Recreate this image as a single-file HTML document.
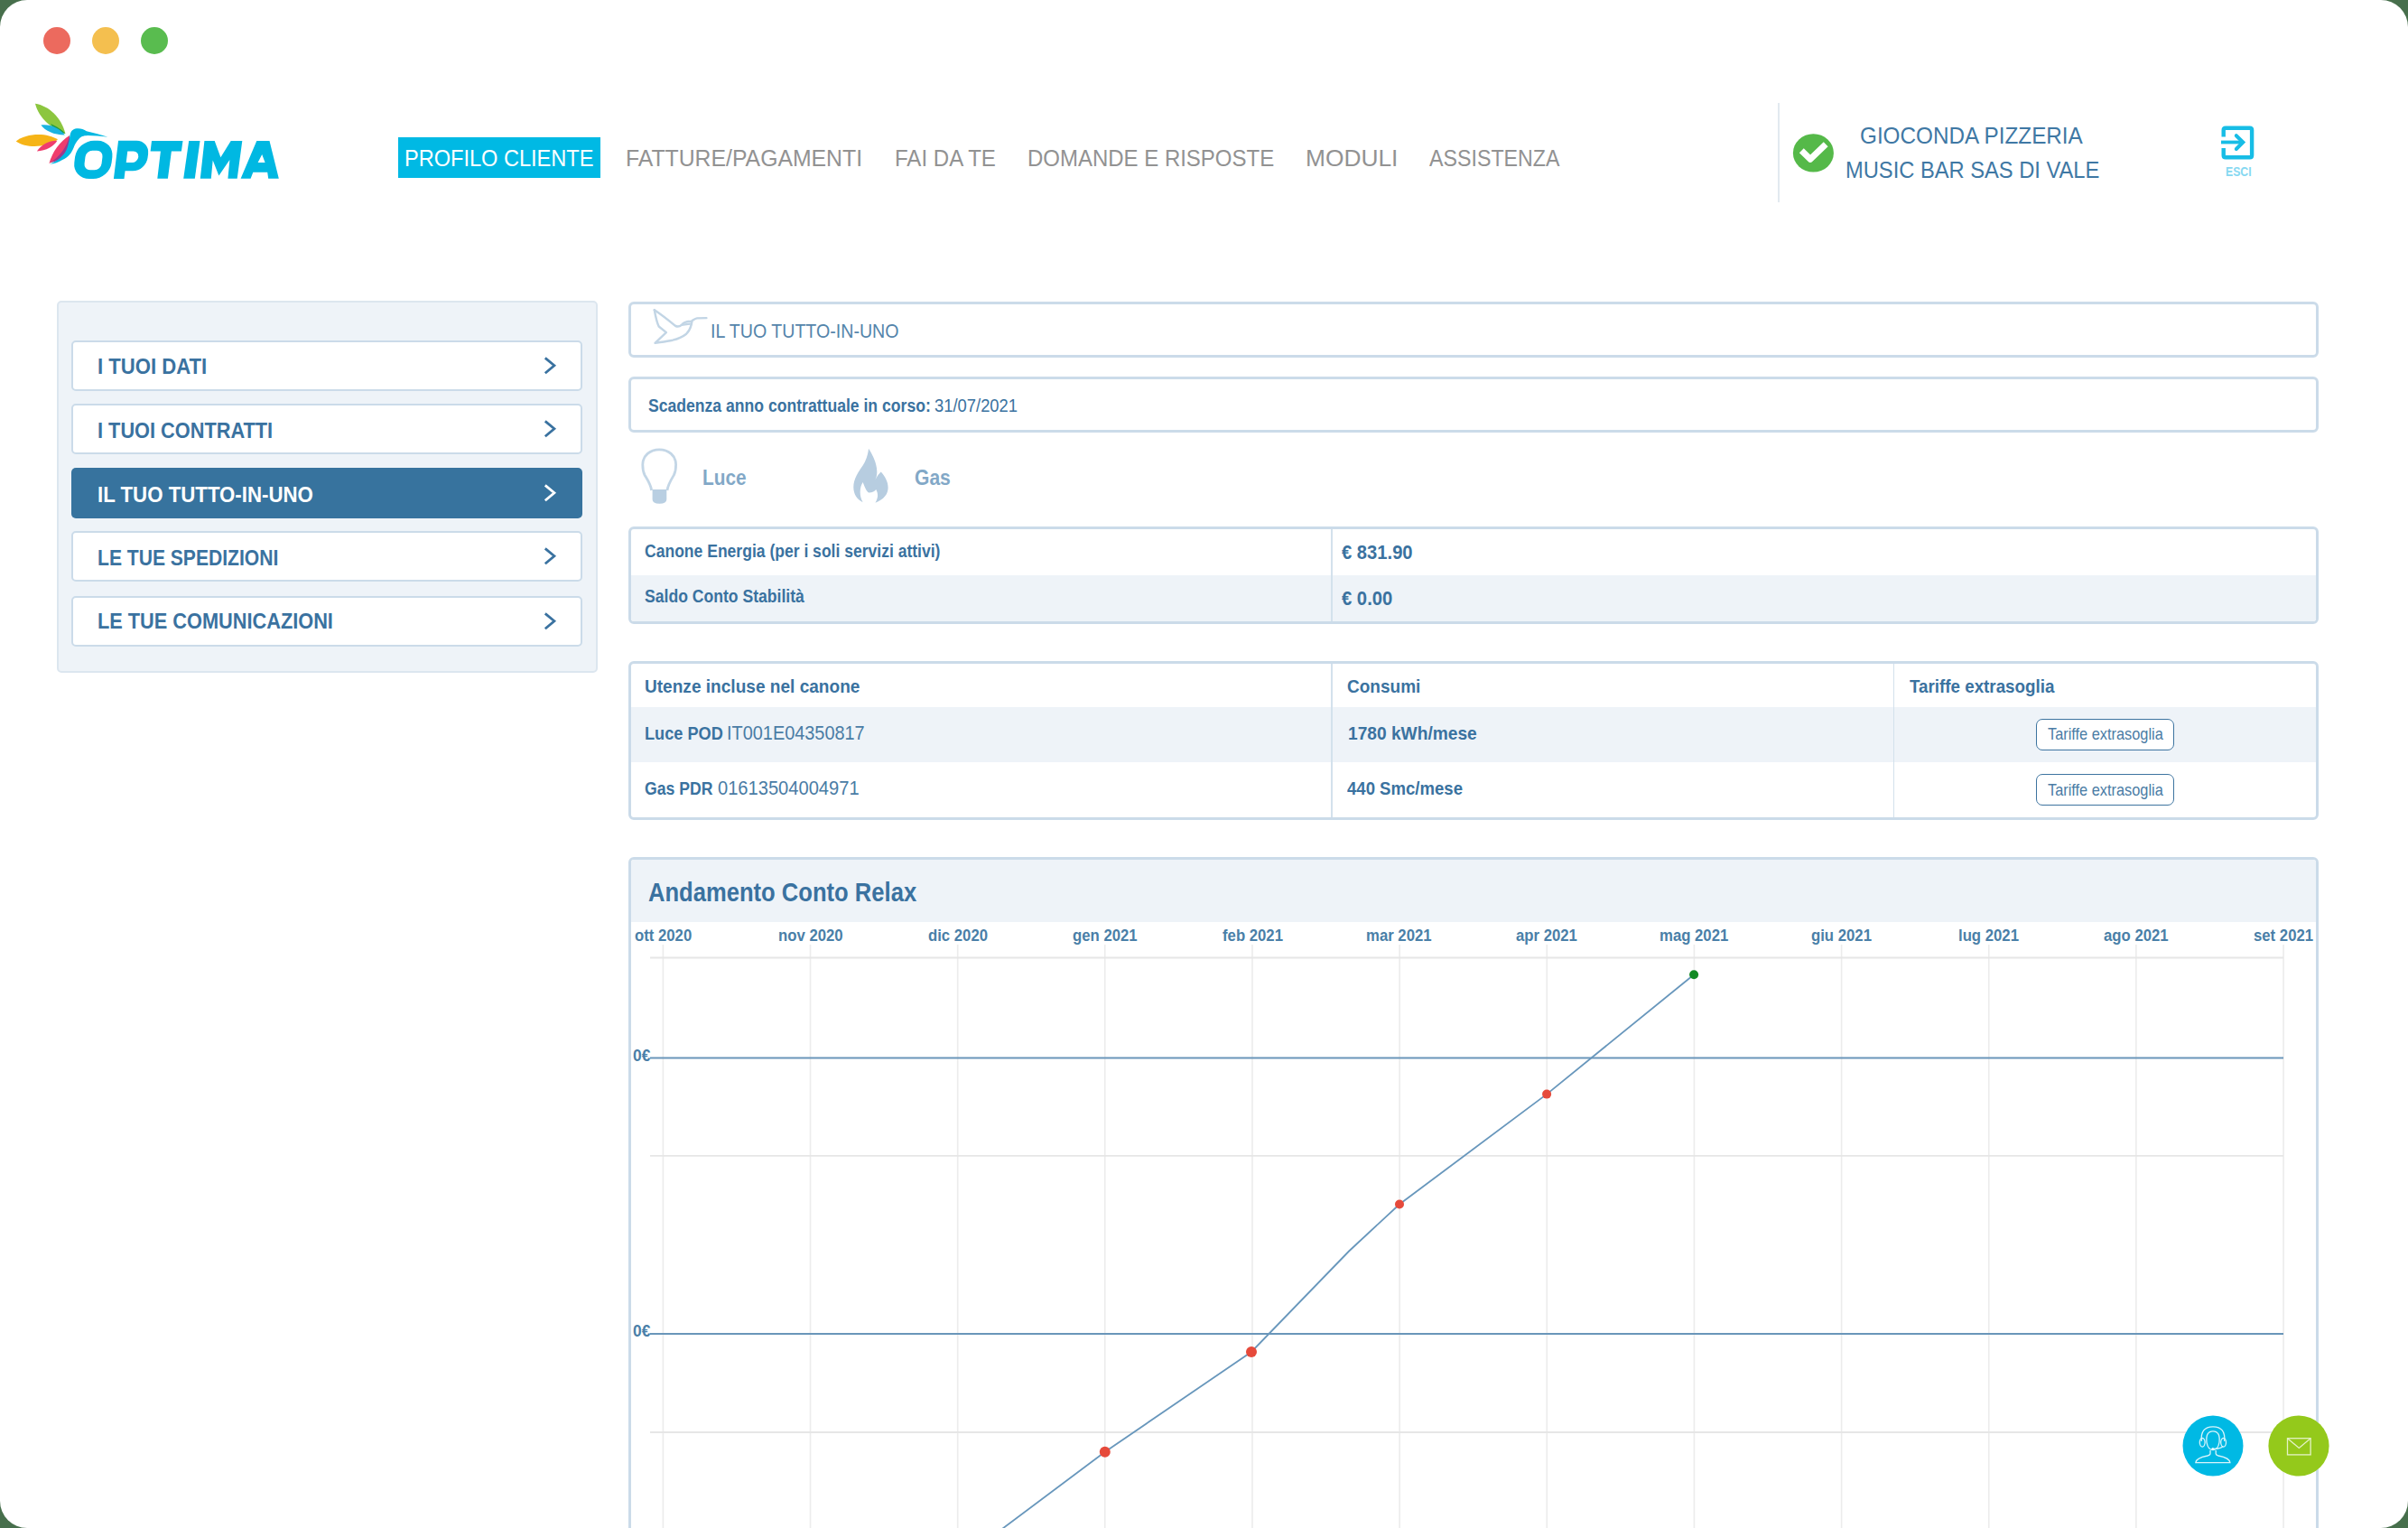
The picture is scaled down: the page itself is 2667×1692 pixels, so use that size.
<!DOCTYPE html>
<html><head><meta charset="utf-8"><style>
*{margin:0;padding:0;box-sizing:border-box;}
html,body{width:2667px;height:1692px;overflow:hidden;background:#476f4c;font-family:"Liberation Sans", sans-serif;}
#win{position:absolute;left:0;top:0;width:2667px;height:1692px;background:#fff;border-radius:30px;overflow:hidden;}
.a{position:absolute;}
.t{position:absolute;white-space:nowrap;line-height:1;transform-origin:0 0;}
.box{position:absolute;border:3px solid #cbdbe9;border-radius:6px;background:#fff;}
</style></head>
<body><div id="win">
<div class="a" style="left:48px;top:30px;width:30px;height:30px;border-radius:50%;background:#ec6a5e"></div>
<div class="a" style="left:102px;top:30px;width:30px;height:30px;border-radius:50%;background:#f4bf4f"></div>
<div class="a" style="left:156px;top:30px;width:30px;height:30px;border-radius:50%;background:#59bc4f"></div>
<svg class="a" style="left:0;top:100px" width="330" height="110" viewBox="0 100 330 110">
<g fill="#00b8e2" fill-rule="evenodd" transform="translate(0,198) skewX(-7) translate(0,-198)">
<path d="M99,155.8 H103 A18.4,18 0 0 1 121.4,173.8 V180 A18.4,18 0 0 1 103,198 H99 A18.9,18 0 0 1 80.1,180 V173.8 A18.9,18 0 0 1 99,155.8 Z M98.5,166.8 A7,7 0 0 0 91.5,173.8 V181.3 A7,7 0 0 0 98.5,188.3 H103.5 A7,7 0 0 0 110.5,181.3 V173.8 A7,7 0 0 0 103.5,166.8 Z"/>
<path d="M125.9,198 V155.8 H146 A14.7,14.7 0 0 1 160.7,170.5 V174.6 A14.7,14.7 0 0 1 146,189.3 H137.5 V198 Z M137.5,167.4 H144 A6.3,6.3 0 0 1 150.3,173.7 A6.3,6.3 0 0 1 144,180 H137.5 Z"/>




</g>
<g fill="#00b8e2" fill-rule="evenodd">
<path d="M168,156 H202.5 L200.9,167.6 H189.9 L185.9,197.8 H174.3 L177.9,167.6 H166.6 Z"/>
<path d="M209.2,156 H221.5 L215.8,197.8 H203.2 Z"/>
<path d="M221.8,197.8 L226.4,156 H237.7 L244.4,174.2 L255.7,156 H268.3 L262.7,197.8 H252.4 L254.4,176.9 L242.4,194.5 L235.7,177.6 L233.8,197.8 Z"/>
<path d="M266.6,197.8 L284.3,156 H298.5 L308.8,197.8 H297.2 L296.2,190.8 H280.3 L277.6,197.8 Z M290.2,170.9 L285.6,179.9 H293.6 Z"/>
</g>
<path fill="#8cc63f" d="M39,114.7 C54,117 68,130 72.4,148 C58,143 43,131 39,114.7 Z"/>
<path fill="#1f9a3e" d="M56,137 C63,140 69,144 72.4,148 C66,147 60,143 56,137 Z"/>
<path fill="#1bb3e0" d="M45.4,138.5 C56,137 66,142 71.8,149.4 C60,149.5 50,145 45.4,138.5 Z"/>
<path fill="#f6b417" d="M17.7,156.5 C28,147.5 52,146 64,154.6 C52,163 30,165 17.7,156.5 Z"/>
<path fill="#ef3d6d" d="M40.9,167.4 C46,160 55,155.5 63.4,155.8 C60,162 51,167 40.9,167.4 Z"/>
<path fill="#ef3d6d" d="M54.4,181 C58,168 66,157 77,150 C77,163 69,175 54.4,181 Z"/>
<path fill="#9b3a8c" d="M56,180 C65,174 74,164 77,150 C78,160 76,168 72,173 C68,177 62,179 56,180 Z"/>
<path fill="#00b8e2" d="M55.4,181.6 C64,178 70.5,172.5 73.5,166 C76.5,159 76.8,153 77.8,148.5 C79,144 82,142.3 86.5,142.3 C90,142.3 93,143.5 95.8,145.2 C104,147 112,149 119.5,151.8 C112,150.8 104,150 97.1,150 C92,150.2 89.5,151.5 87.7,153.5 C84.5,157 82.8,160 81.8,163 C79.5,169.5 75,174.5 69.1,177 C65,179.5 60,181.5 55.4,181.6 Z"/>
</svg>
<div class="a" style="left:441px;top:152px;width:224px;height:45px;background:#00b9e4"></div>
<div class="a" style="left:1969px;top:114px;width:2px;height:110px;background:#e2e9f0"></div>
<svg class="a" style="left:1980px;top:140px" width="60" height="60" viewBox="1980 140 60 60">
<ellipse cx="2008.4" cy="169.4" rx="22.5" ry="21.2" fill="#55b949"/>
<path d="M1995.3,166.8 L2005,176.3 L2022.2,159.8" fill="none" stroke="#fff" stroke-width="7" stroke-linecap="butt" stroke-linejoin="round"/>
</svg>
<svg class="a" style="left:2450px;top:130px" width="60" height="55" viewBox="2450 130 60 55">
<path d="M2462.7,151.5 V144 Q2462.7,141.7 2465,141.7 H2491.8 Q2494.1,141.7 2494.1,144 V172 Q2494.1,174.3 2491.8,174.3 H2465 Q2462.7,174.3 2462.7,172 V164" fill="none" stroke="#17bde6" stroke-width="4.4"/>
<path d="M2460,157.5 H2484" stroke="#17bde6" stroke-width="3.8"/>
<path d="M2476.8,150.2 L2484.3,157.5 L2476.8,165" fill="none" stroke="#17bde6" stroke-width="4" stroke-linecap="round"/>
</svg>
<div class="a" style="left:63px;top:333px;width:599px;height:412px;background:#eef3f8;border:2px solid #dce6ef;border-radius:5px"></div>
<div class="a" style="left:79px;top:377.3px;width:566px;height:56px;background:#fff;border:2.5px solid #cbdbe9;border-radius:5px"></div>
<svg class="a" style="left:595px;top:377.3px" width="30" height="56" viewBox="0 0 30 56"><path d="M8.8,19.3 L18.9,27.7 L8.8,36.2" fill="none" stroke="#3a72a0" stroke-width="2.8"/></svg>
<div class="a" style="left:79px;top:447.3px;width:566px;height:56px;background:#fff;border:2.5px solid #cbdbe9;border-radius:5px"></div>
<svg class="a" style="left:595px;top:447.3px" width="30" height="56" viewBox="0 0 30 56"><path d="M8.8,19.3 L18.9,27.7 L8.8,36.2" fill="none" stroke="#3a72a0" stroke-width="2.8"/></svg>
<div class="a" style="left:79px;top:517.7px;width:566px;height:56.3px;background:#37739e;border-radius:5px"></div>
<svg class="a" style="left:595px;top:517.7px" width="30" height="56" viewBox="0 0 30 56"><path d="M8.8,19.3 L18.9,27.7 L8.8,36.2" fill="none" stroke="#ffffff" stroke-width="2.8"/></svg>
<div class="a" style="left:79px;top:588.3px;width:566px;height:56px;background:#fff;border:2.5px solid #cbdbe9;border-radius:5px"></div>
<svg class="a" style="left:595px;top:588.3px" width="30" height="56" viewBox="0 0 30 56"><path d="M8.8,19.3 L18.9,27.7 L8.8,36.2" fill="none" stroke="#3a72a0" stroke-width="2.8"/></svg>
<div class="a" style="left:79px;top:659.5px;width:566px;height:56px;background:#fff;border:2.5px solid #cbdbe9;border-radius:5px"></div>
<svg class="a" style="left:595px;top:659.5px" width="30" height="56" viewBox="0 0 30 56"><path d="M8.8,19.3 L18.9,27.7 L8.8,36.2" fill="none" stroke="#3a72a0" stroke-width="2.8"/></svg>
<div class="box" style="left:696px;top:334px;width:1871.6px;height:62px"></div>
<div class="box" style="left:696px;top:417px;width:1871.6px;height:62px"></div>
<svg class="a" style="left:715px;top:335px" width="80" height="55" viewBox="715 335 80 55">
<g fill="none" stroke="#c2d5e5" stroke-width="2.4" stroke-linejoin="round" stroke-linecap="round">
<path d="M724.8,343.2 C732,348 741,355 747.7,360.6 C750,362 753,361.5 754.9,359.9 C757,357 761,355.7 765.7,355.7 C768,354.5 769.5,352.7 772,352.4 L782.4,352.1"/>
<path d="M766.4,356 C765.5,362 763.5,366.5 760.2,369.7 C756,373 751,375.3 745,376.7 C738,378 731,379 725.5,379.9 L737.9,368.1 L729.7,361.5 C727.5,357 726,350 724.8,343.2"/>
<path d="M754.9,359.9 L764.1,358.6"/>
</g>
</svg>
<svg class="a" style="left:700px;top:490px" width="60" height="75" viewBox="700 490 60 75">
<path d="M721.6,543 C721,537 717,531 714,526 C712,522 711.8,518 711.8,514.5 C711.8,504.5 720,497.8 730.2,497.8 C740.4,497.8 748.6,504.5 748.6,514.5 C748.6,518 748.4,522 746.4,526 C743.4,531 739.6,537 739,543" fill="none" stroke="#c3d6e6" stroke-width="2.8"/>
<path d="M722.6,542 H738.3 V553 Q738.3,557.7 730.45,557.7 Q722.6,557.7 722.6,553 Z" fill="#b9cfe2"/>
</svg>
<svg class="a" style="left:940px;top:490px" width="50" height="72" viewBox="940 490 50 72">
<path d="M962,496.8 C966,503 971,512 971.3,522 C971.5,526 970.5,529 969.4,531.2 C971.5,527 973.5,524.5 975.7,522.4 C980,527 983.6,533 983.6,540 C983.6,547 979,553 969.4,556.7 C972.5,552 973,547 970.3,542 C968.5,544.5 966,545.5 962,545.4 C959.5,544 958,540 955.6,534.1 C952.5,539 951,548 955.6,556.2 C949,553 945.3,547 945.3,539.5 C945.3,530 951,522 955.6,515.5 C959,510.5 961.5,503 962,496.8 Z" fill="#b7cde0"/>
</svg>
<div class="a" style="left:696px;top:583px;width:1871.6px;height:108px;border:3px solid #cbdbe9;border-radius:6px;overflow:hidden;background:#fff">
<div class="a" style="left:0;top:50.5px;width:100%;height:60px;background:#eef3f8"></div>
<div class="a" style="left:775.2px;top:0;width:1.6px;height:100%;background:#d3e1ec"></div>
</div>
<div class="a" style="left:696px;top:732px;width:1871.6px;height:176px;border:3px solid #cbdbe9;border-radius:6px;overflow:hidden;background:#fff">
<div class="a" style="left:0;top:48px;width:100%;height:60.5px;background:#eef3f8"></div>
<div class="a" style="left:775.2px;top:0;width:1.6px;height:100%;background:#d3e1ec"></div>
<div class="a" style="left:1397.7px;top:0;width:1.6px;height:100%;background:#d3e1ec"></div>
</div>
<div class="a" style="left:2254.9px;top:795.5px;width:153px;height:35.6px;border:1.6px solid #3d74a0;border-radius:7px;background:#fff"></div>
<div class="a" style="left:2254.9px;top:856.9px;width:153px;height:34.9px;border:1.6px solid #3d74a0;border-radius:7px;background:#fff"></div>
<div class="a" style="left:696px;top:949px;width:1871.6px;height:800px;border:3px solid #cbdbe9;border-radius:6px;overflow:hidden;background:#fff">
<div class="a" style="left:0;top:0;width:100%;height:69px;background:#eef3f8"></div>
</div>
<svg class="a" style="left:0;top:0" width="2667" height="1692" viewBox="0 0 2667 1692">
<line x1="734.4" y1="1046" x2="734.4" y2="1692" stroke="#ececec" stroke-width="1.6"/>
<line x1="897.5" y1="1046" x2="897.5" y2="1692" stroke="#ececec" stroke-width="1.6"/>
<line x1="1060.7" y1="1046" x2="1060.7" y2="1692" stroke="#ececec" stroke-width="1.6"/>
<line x1="1223.8" y1="1046" x2="1223.8" y2="1692" stroke="#ececec" stroke-width="1.6"/>
<line x1="1387.0" y1="1046" x2="1387.0" y2="1692" stroke="#ececec" stroke-width="1.6"/>
<line x1="1550.2" y1="1046" x2="1550.2" y2="1692" stroke="#ececec" stroke-width="1.6"/>
<line x1="1713.3" y1="1046" x2="1713.3" y2="1692" stroke="#ececec" stroke-width="1.6"/>
<line x1="1876.4" y1="1046" x2="1876.4" y2="1692" stroke="#ececec" stroke-width="1.6"/>
<line x1="2039.6" y1="1046" x2="2039.6" y2="1692" stroke="#ececec" stroke-width="1.6"/>
<line x1="2202.8" y1="1046" x2="2202.8" y2="1692" stroke="#ececec" stroke-width="1.6"/>
<line x1="2365.9" y1="1046" x2="2365.9" y2="1692" stroke="#ececec" stroke-width="1.6"/>
<line x1="2529.1" y1="1046" x2="2529.1" y2="1692" stroke="#ececec" stroke-width="1.6"/>
<line x1="720" y1="1060.5" x2="2529" y2="1060.5" stroke="#e6e6e6" stroke-width="1.8"/>
<line x1="720" y1="1279.8" x2="2529" y2="1279.8" stroke="#e6e6e6" stroke-width="1.8"/>
<line x1="720" y1="1586" x2="2529" y2="1586" stroke="#e6e6e6" stroke-width="1.8"/>
<line x1="720" y1="1171.4" x2="2529" y2="1171.4" stroke="#6a96ba" stroke-width="2"/>
<line x1="720" y1="1477" x2="2529" y2="1477" stroke="#6a96ba" stroke-width="2"/>
<polyline fill="none" stroke="#6897bc" stroke-width="1.8" points="1100.6,1700 1223.8,1607.7 1386,1497 1494,1385.5 1550,1333.5 1713.1,1211.6 1876.1,1079.2"/>
<circle cx="1223.8" cy="1607.7" r="6" fill="#e64a3b"/>
<circle cx="1386" cy="1497" r="6" fill="#e64a3b"/>
<circle cx="1550" cy="1333.5" r="5" fill="#e64a3b"/>
<circle cx="1713.1" cy="1211.6" r="5" fill="#e64a3b"/>
<circle cx="1876.1" cy="1079.2" r="5" fill="#128a24"/>
</svg>
<svg class="a" style="left:2400px;top:1550px" width="200" height="100" viewBox="2400 1550 200 100">
<circle cx="2451" cy="1601" r="33.5" fill="#00b9e4"/>
<g fill="none" stroke="#d9f4fb" stroke-width="1.3">
<path d="M2438.3,1596 Q2436.8,1579.8 2451,1579.8 Q2465.2,1579.8 2463.7,1596"/>
<path d="M2444,1597 Q2442.8,1584.8 2451,1584.8 Q2459.2,1584.8 2458,1597 Q2456.5,1605.6 2451,1605.6 Q2445.5,1605.6 2444,1597 Z"/>
<ellipse cx="2439.2" cy="1597.3" rx="2.9" ry="4.8"/>
<ellipse cx="2462.6" cy="1597.3" rx="2.9" ry="4.8"/>
<path d="M2462.2,1601.5 Q2459.5,1604.4 2451.5,1604.4"/>
<path d="M2448,1606 V1609.5 Q2448,1611.2 2445,1612 Q2432,1614.5 2431.8,1619.7 H2470 Q2469.6,1614.5 2457,1612 Q2454.2,1611.2 2454.2,1609.5 V1606"/>
</g>
<circle cx="2450.8" cy="1604.4" r="1.5" fill="#e6f8fd"/>
<circle cx="2546" cy="1601" r="33.6" fill="#94c91b"/>
<g fill="none" stroke="#e4f2c6" stroke-width="1.3">
<rect x="2533.5" y="1592.7" width="25.6" height="18.2"/>
<path d="M2533.5,1592.7 L2546.3,1603.5 L2559.1,1592.7"/>
</g>
</svg>
<div class="t" style="left:448.17px;top:163.20px;font-size:25.727px;font-weight:400;color:#ffffff;transform:scaleX(0.9159)">PROFILO CLIENTE</div>
<div class="t" style="left:693.07px;top:163.20px;font-size:25.727px;font-weight:400;color:#929292;transform:scaleX(0.9634)">FATTURE/PAGAMENTI</div>
<div class="t" style="left:990.63px;top:163.20px;font-size:25.727px;font-weight:400;color:#929292;transform:scaleX(0.9359)">FAI DA TE</div>
<div class="t" style="left:1138.14px;top:163.20px;font-size:25.727px;font-weight:400;color:#929292;transform:scaleX(0.9324)">DOMANDE E RISPOSTE</div>
<div class="t" style="left:1445.85px;top:163.20px;font-size:25.727px;font-weight:400;color:#929292;transform:scaleX(1.0240)">MODULI</div>
<div class="t" style="left:1583.40px;top:163.20px;font-size:25.727px;font-weight:400;color:#929292;transform:scaleX(0.9025)">ASSISTENZA</div>
<div class="t" style="left:2060.38px;top:137.40px;font-size:26.308px;font-weight:400;color:#3f78a4;transform:scaleX(0.9229)">GIOCONDA PIZZERIA</div>
<div class="t" style="left:2044.29px;top:174.90px;font-size:26.163px;font-weight:400;color:#3f78a4;transform:scaleX(0.9059)">MUSIC BAR SAS DI VALE</div>
<div class="t" style="left:2465.09px;top:181.60px;font-size:15.116px;font-weight:700;color:#86d8f1;transform:scaleX(0.8091)">ESCI</div>
<div class="t" style="left:108.05px;top:393.90px;font-size:23.983px;font-weight:700;color:#3a72a0;transform:scaleX(0.9227)">I TUOI DATI</div>
<div class="t" style="left:108.08px;top:464.90px;font-size:23.983px;font-weight:700;color:#3a72a0;transform:scaleX(0.9076)">I TUOI CONTRATTI</div>
<div class="t" style="left:108.18px;top:535.80px;font-size:24.419px;font-weight:700;color:#ffffff;transform:scaleX(0.9112)">IL TUO TUTTO-IN-UNO</div>
<div class="t" style="left:108.24px;top:606.10px;font-size:23.983px;font-weight:700;color:#3a72a0;transform:scaleX(0.8795)">LE TUE SPEDIZIONI</div>
<div class="t" style="left:108.19px;top:676.30px;font-size:23.983px;font-weight:700;color:#3a72a0;transform:scaleX(0.9070)">LE TUE COMUNICAZIONI</div>
<div class="t" style="left:787.20px;top:355.80px;font-size:21.802px;font-weight:400;color:#5585ab;transform:scaleX(0.9000)">IL TUO TUTTO-IN-UNO</div>
<div class="t" style="left:718.30px;top:439.50px;font-size:19.600px;font-weight:700;color:#3a72a0;transform:scaleX(0.8977)">Scadenza anno contrattuale in corso:</div>
<div class="t" style="left:1035.33px;top:437.50px;font-size:21.076px;font-weight:400;color:#3a72a0;transform:scaleX(0.8731)">31/07/2021</div>
<div class="t" style="left:777.83px;top:517.90px;font-size:23.474px;font-weight:700;color:#82a8c7;transform:scaleX(0.8865)">Luce</div>
<div class="t" style="left:1013.30px;top:517.90px;font-size:23.474px;font-weight:700;color:#82a8c7;transform:scaleX(0.8976)">Gas</div>
<div class="t" style="left:714.13px;top:599.60px;font-size:20.141px;font-weight:700;color:#3a72a0;transform:scaleX(0.8714)">Canone Energia (per i soli servizi attivi)</div>
<div class="t" style="left:1485.90px;top:601.20px;font-size:21.802px;font-weight:700;color:#3a72a0;transform:scaleX(0.9262)">€ 831.90</div>
<div class="t" style="left:714.13px;top:650.00px;font-size:20.141px;font-weight:700;color:#3a72a0;transform:scaleX(0.8736)">Saldo Conto Stabilità</div>
<div class="t" style="left:1485.90px;top:651.80px;font-size:21.802px;font-weight:700;color:#3a72a0;transform:scaleX(0.9283)">€ 0.00</div>
<div class="t" style="left:714.26px;top:749.80px;font-size:20.276px;font-weight:700;color:#3a72a0;transform:scaleX(0.9409)">Utenze incluse nel canone</div>
<div class="t" style="left:1492.16px;top:749.80px;font-size:20.276px;font-weight:700;color:#3a72a0;transform:scaleX(0.9381)">Consumi</div>
<div class="t" style="left:2115.40px;top:749.70px;font-size:20.276px;font-weight:700;color:#3a72a0;transform:scaleX(0.9266)">Tariffe extrasoglia</div>
<div class="t" style="left:714.32px;top:802.10px;font-size:20.712px;font-weight:700;color:#3a72a0;transform:scaleX(0.8773)">Luce POD</div>
<div class="t" style="left:805.07px;top:801.10px;font-size:21.802px;font-weight:400;color:#4a7ca5;transform:scaleX(0.9128)">IT001E04350817</div>
<div class="t" style="left:1492.57px;top:802.10px;font-size:20.712px;font-weight:700;color:#3a72a0;transform:scaleX(0.9255)">1780 kWh/mese</div>
<div class="t" style="left:714.35px;top:863.20px;font-size:20.712px;font-weight:700;color:#3a72a0;transform:scaleX(0.8529)">Gas PDR</div>
<div class="t" style="left:795.08px;top:862.20px;font-size:21.802px;font-weight:400;color:#4a7ca5;transform:scaleX(0.9226)">01613504004971</div>
<div class="t" style="left:1492.20px;top:863.20px;font-size:20.712px;font-weight:700;color:#3a72a0;transform:scaleX(0.8965)">440 Smc/mese</div>
<div class="t" style="left:2267.50px;top:804.20px;font-size:18.519px;font-weight:400;color:#4a7ca5;transform:scaleX(0.8834)">Tariffe extrasoglia</div>
<div class="t" style="left:2267.50px;top:865.50px;font-size:18.519px;font-weight:400;color:#4a7ca5;transform:scaleX(0.8834)">Tariffe extrasoglia</div>
<div class="t" style="left:718.11px;top:973.80px;font-size:28.721px;font-weight:700;color:#3a72a0;transform:scaleX(0.8910)">Andamento Conto Relax</div>
<div class="t" style="left:702.64px;top:1026.90px;font-size:18.459px;font-weight:700;color:#4a7fa8;transform:scaleX(0.9074)">ott 2020</div>
<div class="t" style="left:861.71px;top:1026.90px;font-size:18.459px;font-weight:700;color:#4a7fa8;transform:scaleX(0.9074)">nov 2020</div>
<div class="t" style="left:1027.58px;top:1026.90px;font-size:18.459px;font-weight:700;color:#4a7fa8;transform:scaleX(0.9074)">dic 2020</div>
<div class="t" style="left:1187.56px;top:1026.90px;font-size:18.459px;font-weight:700;color:#4a7fa8;transform:scaleX(0.9074)">gen 2021</div>
<div class="t" style="left:1353.88px;top:1026.90px;font-size:18.459px;font-weight:700;color:#4a7fa8;transform:scaleX(0.9074)">feb 2021</div>
<div class="t" style="left:1513.40px;top:1026.90px;font-size:18.459px;font-weight:700;color:#4a7fa8;transform:scaleX(0.9074)">mar 2021</div>
<div class="t" style="left:1679.27px;top:1026.90px;font-size:18.459px;font-weight:700;color:#4a7fa8;transform:scaleX(0.9074)">apr 2021</div>
<div class="t" style="left:1837.89px;top:1026.90px;font-size:18.459px;font-weight:700;color:#4a7fa8;transform:scaleX(0.9074)">mag 2021</div>
<div class="t" style="left:2006.03px;top:1026.90px;font-size:18.459px;font-weight:700;color:#4a7fa8;transform:scaleX(0.9074)">giu 2021</div>
<div class="t" style="left:2169.18px;top:1026.90px;font-size:18.459px;font-weight:700;color:#4a7fa8;transform:scaleX(0.9074)">lug 2021</div>
<div class="t" style="left:2329.61px;top:1026.90px;font-size:18.459px;font-weight:700;color:#4a7fa8;transform:scaleX(0.9074)">ago 2021</div>
<div class="t" style="left:2495.67px;top:1026.90px;font-size:18.459px;font-weight:700;color:#4a7fa8;transform:scaleX(0.9074)">set 2021</div>
<div class="t" style="left:701.01px;top:1160.60px;font-size:17.442px;font-weight:700;color:#4a7fa8;transform:scaleX(0.9944)">0€</div>
<div class="t" style="left:701.01px;top:1466.40px;font-size:17.442px;font-weight:700;color:#4a7fa8;transform:scaleX(0.9944)">0€</div>
</div></body></html>
